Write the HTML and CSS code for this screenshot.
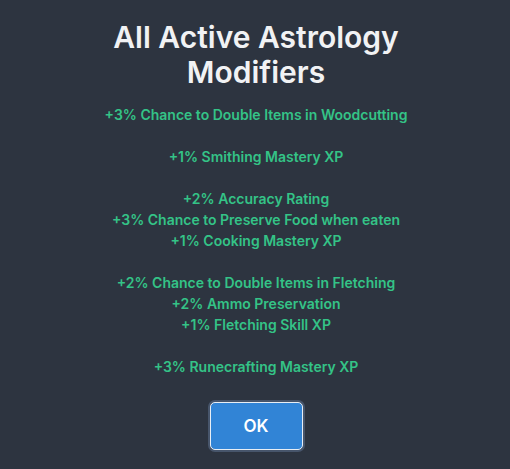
FILE: index.html
```html
<!DOCTYPE html>
<html lang="en">
<head>
    <meta charset="UTF-8">
    <meta name="viewport" content="width=device-width, initial-scale=1.0">
    <title>Astrology Modifiers</title>
    <link rel="stylesheet" href="styles.css">
</head>
<body>

    <div class="popup">
        <h2 class="popup-title">All Active Astrology Modifiers</h2>

        <!-- Modifier list, grouped by constellation -->
        <div class="popup-content">
            <div class="mod-group">
                <span>+3% Chance to Double Items in Woodcutting</span>
            </div>
            <div class="mod-group">
                <span>+1% Smithing Mastery XP</span>
            </div>
            <div class="mod-group">
                <span>+2% Accuracy Rating</span>
                <span>+3% Chance to Preserve Food when eaten</span>
                <span>+1% Cooking Mastery XP</span>
            </div>
            <div class="mod-group">
                <span>+2% Chance to Double Items in Fletching</span>
                <span>+2% Ammo Preservation</span>
                <span>+1% Fletching Skill XP</span>
            </div>
            <div class="mod-group">
                <span>+3% Runecrafting Mastery XP</span>
            </div>
        </div>

        <div class="actions">
            <button class="btn-confirm">OK</button>
        </div>
    </div>

</body>
</html>
```

FILE: styles.css
```css
body {
    margin: 0;
    background: #2d3440;
    font-family: Inter, "Noto Sans", sans-serif;
}
.popup {
    width: 510px;
    height: 469px;
    box-sizing: border-box;
    padding-top: 20px;
    padding-left: 2px;
    display: flex;
    flex-direction: column;
    align-items: center;
}
.popup-title {
    margin: 0;
    width: 320px;
    text-align: center;
    color: #f1f2f4;
    font-size: 30px;
    font-weight: 600;
    line-height: 35px;
}
.popup-content {
    margin-top: 14px;
    display: flex;
    flex-direction: column;
    gap: 21px;
    text-align: center;
    color: #34c387;
    font-size: 14px;
    font-weight: 600;
    line-height: 21px;
}
.mod-group span {
    display: block;
}
.actions {
    margin-top: 25px;
}
.btn-confirm {
    width: 93px;
    height: 48px;
    border: 1px solid #e8eef5;
    border-radius: 5px;
    background: #3184d6;
    color: #fff;
    font-family: inherit;
    font-size: 17px;
    font-weight: 600;
    box-shadow: 0 0 0 2px rgba(120, 150, 190, 0.35);
    cursor: pointer;
}
.btn-confirm:hover {
    background: #2a76c2;
}
```
